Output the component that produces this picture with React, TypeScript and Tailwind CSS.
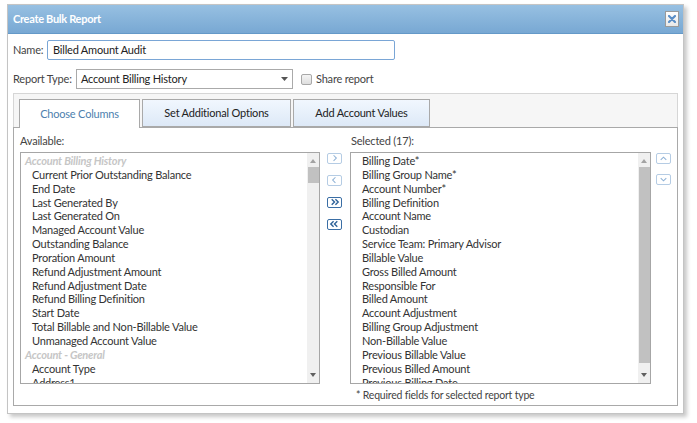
import React from 'react';

const available: { text: string; group?: boolean }[] = [
  { text: 'Account Billing History', group: true },
  { text: 'Current Prior Outstanding Balance' },
  { text: 'End Date' },
  { text: 'Last Generated By' },
  { text: 'Last Generated On' },
  { text: 'Managed Account Value' },
  { text: 'Outstanding Balance' },
  { text: 'Proration Amount' },
  { text: 'Refund Adjustment Amount' },
  { text: 'Refund Adjustment Date' },
  { text: 'Refund Billing Definition' },
  { text: 'Start Date' },
  { text: 'Total Billable and Non-Billable Value' },
  { text: 'Unmanaged Account Value' },
  { text: 'Account - General', group: true },
  { text: 'Account Type' },
  { text: 'Address1' },
];

const selected = [
  'Billing Date*',
  'Billing Group Name*',
  'Account Number*',
  'Billing Definition',
  'Account Name',
  'Custodian',
  'Service Team: Primary Advisor',
  'Billable Value',
  'Gross Billed Amount',
  'Responsible For',
  'Billed Amount',
  'Account Adjustment',
  'Billing Group Adjustment',
  'Non-Billable Value',
  'Previous Billable Value',
  'Previous Billed Amount',
  'Previous Billing Date',
];

function Scrollbar({ thumbTop, thumbHeight }: { thumbTop: number; thumbHeight: number }) {
  return (
    <div className="relative w-[12px] h-full bg-[#f0f0f0] shrink-0">
      <svg className="absolute left-[3px] top-[6px]" width="6" height="4" viewBox="0 0 6 4">
        <path d="M0 4 L3 0 L6 4 Z" fill="#a3a3a3" />
      </svg>
      <div className="absolute left-[1px] right-0 bg-[#c1c1c1]" style={{ top: thumbTop, height: thumbHeight }} />
      <svg className="absolute left-[3px] bottom-[6px]" width="6" height="4" viewBox="0 0 6 4">
        <path d="M0 0 L3 4 L6 0 Z" fill="#606060" />
      </svg>
    </div>
  );
}

function MoveButton({ kind, enabled }: { kind: 'r' | 'l' | 'rr' | 'll' | 'up' | 'down'; enabled?: boolean }) {
  const color = enabled ? '#2f6399' : '#8fb2d6';
  const border = enabled ? 'border-[#3a6ea5]' : 'border-[#b5cce4]';
  const paths: Record<string, string> = {
    r: 'M6 2 L9 5 L6 8',
    l: 'M8 2 L5 5 L8 8',
    rr: 'M4 2 L7 5 L4 8 M8 2 L11 5 L8 8',
    ll: 'M6 2 L3 5 L6 8 M10 2 L7 5 L10 8',
    up: 'M4 7 L7 4 L10 7',
    down: 'M4 4 L7 7 L10 4',
  };
  return (
    <div className={`w-[15px] h-[11px] border ${border} rounded-[2px] bg-white flex items-center justify-center`}>
      <svg width="13" height="9" viewBox="0 1 14 9">
        <path d={paths[kind]} fill="none" stroke={color} strokeWidth={enabled ? 1.5 : 1.1} />
      </svg>
    </div>
  );
}

export default function App() {
  return (
    <div
      className="w-[697px] h-[423px] bg-white pl-[7px] pt-[4px] text-[11px] tracking-[-0.2px] text-[#333]"
      style={{ fontFamily: 'Lato, "Open Sans", sans-serif' }}
    >
      <div className="w-[677px] h-[410px] border border-[#c4c4c4] bg-white shadow-[3px_3px_4px_rgba(0,0,0,0.22)] flex flex-col">
        {/* header */}
        <div className="h-[29px] shrink-0 bg-gradient-to-b from-[#97c0e2] to-[#78a8d3] border-b border-[#6499c8] flex items-center justify-between pl-[5px] pr-[4px]">
          <span className="text-white font-bold text-[11px] tracking-[-0.3px]">Create Bulk Report</span>
          <div className="w-[14px] h-[16px] border border-[#9a9a9a] bg-gradient-to-b from-white to-[#e8e8e8] flex items-center justify-center">
            <svg width="8" height="8" viewBox="0 0 8 8">
              <path d="M1 1 L7 7 M7 1 L1 7" stroke="#5b8fc7" strokeWidth="2.2" strokeLinecap="round" />
            </svg>
          </div>
        </div>

        <div className="flex-1 flex flex-col px-[5px] pt-[6px]">
          {/* name row */}
          <div className="flex items-center h-[20px]">
            <span className="text-[#444] w-[34px] whitespace-nowrap">Name:</span>
            <div className="w-[348px] h-[20px] border border-[#7aa6d6] rounded-[2px] flex items-center pl-[5px] text-[#222]">
              Billed Amount Audit
            </div>
          </div>

          {/* report type row */}
          <div className="flex items-center h-[20px] mt-[9px]">
            <span className="text-[#444] w-[63px] whitespace-nowrap">Report Type:</span>
            <div className="w-[217px] h-[20px] border border-[#aaaaaa] flex items-center justify-between pl-[4px] pr-[4px] text-[#222]">
              <span>Account Billing History</span>
              <svg width="7" height="4" viewBox="0 0 7 4">
                <path d="M0 0 L7 0 L3.5 4 Z" fill="#555" />
              </svg>
            </div>
            <div className="ml-[8px] w-[11px] h-[11px] border border-[#a8a8a8] rounded-[2px] bg-gradient-to-b from-[#f4f4f4] to-[#dedede]" />
            <span className="ml-[4px] text-[#444]">Share report</span>
          </div>

          {/* tabs container */}
          <div className="mt-[4px] h-[313px] border border-[#d6d6d6] bg-[#f6f6f6] flex flex-col">
            <div className="flex gap-[2px] pl-[5px] pt-[5px] h-[34px] shrink-0">
              <div className="w-[121px] h-[29px] border border-b-0 border-[#a9a9a9] bg-white flex items-center justify-center text-[#4d7fae] relative z-10">
                Choose Columns
              </div>
              <div className="w-[149px] h-[28px] border border-[#a9a9a9] bg-gradient-to-b from-[#f1f7fe] to-[#dde9f7] flex items-center justify-center text-[#222]">
                Set Additional Options
              </div>
              <div className="w-[137px] h-[28px] border border-[#a9a9a9] bg-gradient-to-b from-[#f1f7fe] to-[#dde9f7] flex items-center justify-center text-[#222]">
                Add Account Values
              </div>
            </div>

            {/* panel */}
            <div className="-mx-px -mb-px -mt-px flex-1 border border-[#a9a9a9] bg-white flex pl-[6px] pt-[6px]">
              {/* available */}
              <div className="flex flex-col w-[300px]">
                <div className="h-[18px] leading-[14px] text-[#444]">Available:</div>
                <div className="h-[232px] border border-[#a6a6a6] flex">
                  <div className="flex-1 overflow-hidden pt-[1px]">
                    {available.map((it) =>
                      it.group ? (
                        <div key={it.text} className="leading-[13.85px] h-[13.85px] pl-[4px] italic font-bold text-[#c6c6c6] whitespace-nowrap">
                          {it.text}
                        </div>
                      ) : (
                        <div key={it.text} className="leading-[13.85px] h-[13.85px] pl-[11px] whitespace-nowrap">
                          {it.text}
                        </div>
                      )
                    )}
                  </div>
                  <Scrollbar thumbTop={14} thumbHeight={16} />
                </div>
              </div>

              {/* move buttons */}
              <div className="flex flex-col gap-[11px] ml-[7px] mt-[19px]">
                <MoveButton kind="r" />
                <MoveButton kind="l" />
                <MoveButton kind="rr" enabled />
                <MoveButton kind="ll" enabled />
              </div>

              {/* selected */}
              <div className="flex flex-col w-[301px] ml-[8px]">
                <div className="h-[18px] leading-[14px] text-[#444] pl-[1px]">Selected (17):</div>
                <div className="h-[232px] border border-[#a6a6a6] flex">
                  <div className="flex-1 overflow-hidden pt-[1px]">
                    {selected.map((s) => (
                      <div key={s} className="leading-[13.85px] h-[13.85px] pl-[11px] whitespace-nowrap">
                        {s}
                      </div>
                    ))}
                  </div>
                  <Scrollbar thumbTop={14} thumbHeight={196} />
                </div>
                <div className="mt-[4px] pl-[6px] text-[10.5px] text-[#444]">* Required fields for selected report type</div>
              </div>

              {/* up / down */}
              <div className="flex flex-col gap-[10px] ml-[5px] mt-[19px]">
                <MoveButton kind="up" />
                <MoveButton kind="down" />
              </div>
            </div>
          </div>
        </div>
      </div>
    </div>
  );
}
